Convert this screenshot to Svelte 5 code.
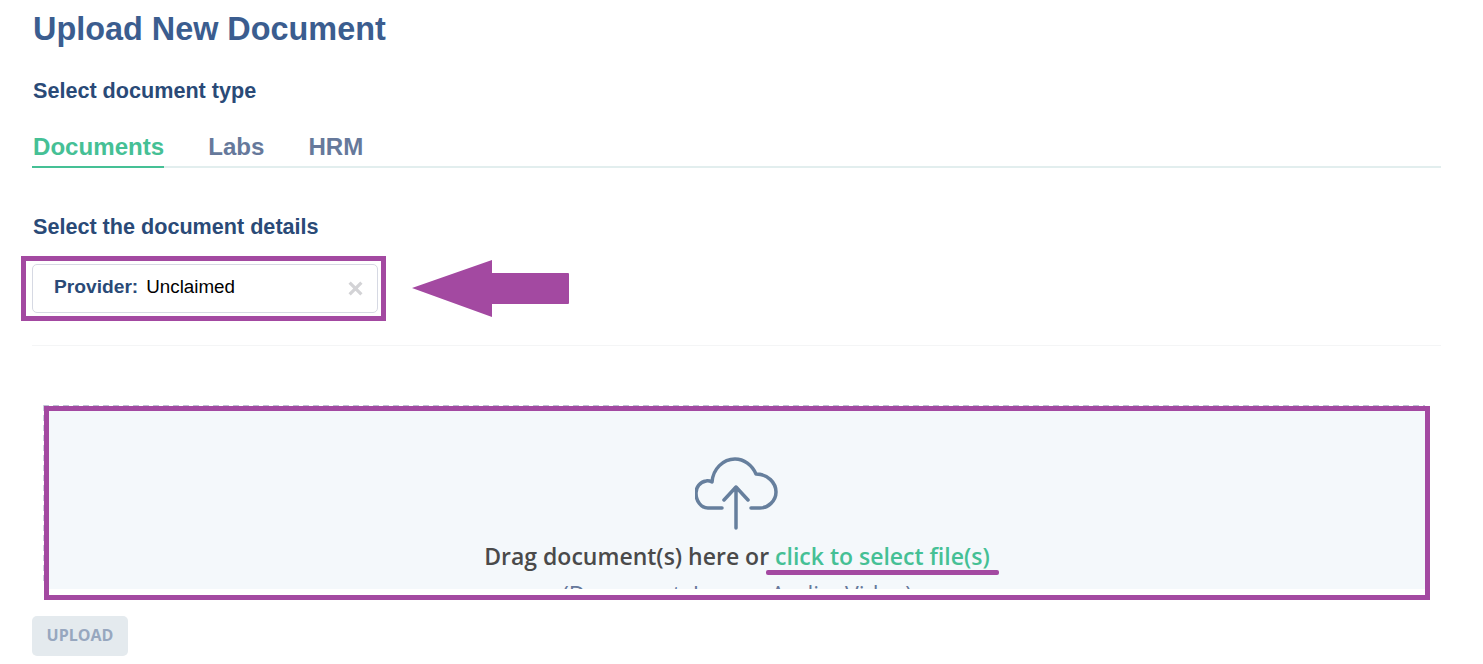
<script lang="ts">
  const tabs = ["Documents", "Labs", "HRM"];
  let active = $state("Documents");
</script>

<main class="page">
  <h1>Upload New Document</h1>

  <h2 class="type-title">Select document type</h2>
  <div class="tabs">
    {#each tabs as tab}
      <button class="tab" class:active={active === tab} onclick={() => (active = tab)}>{tab}</button>
    {/each}
  </div>

  <h2 class="details-title">Select the document details</h2>
  <div class="filter-row">
    <div class="select-wrap">
      <div class="select">
        <span class="select-label">Provider:</span>
        <span class="select-value">Unclaimed</span>
        <svg class="clear" viewBox="0 0 14 14" width="15" height="15" aria-hidden="true">
          <path d="M1.5 1.5l11 11M12.5 1.5l-11 11" />
        </svg>
      </div>
    </div>
    <svg class="arrow" viewBox="0 0 158 58" width="158" height="58" aria-hidden="true">
      <path d="M0 28L80 0V13H156Q157 13 157 14V43Q157 44 156 44H80V57Z" />
    </svg>
  </div>
  <hr />

  <div class="drop-frame">
    <div class="dropzone">
      <svg class="cloud" viewBox="1 0 84 74" width="84" height="74" aria-hidden="true">
        <path d="M28 51H14C7 51 2 44 2 36C2 30 6 25 12 24C14 23.500 16 24 18 25C19 12 29 2 41 2C50 2 58 8 62 17C74 17 82 26 82 35C82 44 74 51 66 51H57" />
        <path d="M42 71V30M30 43L42 30L54 43" />
      </svg>
      <p class="drop-text">Drag document(s) here or <span class="link">click to select file(s)</span></p>
      <p class="drop-hint">(Document, Image, Audio, Video)</p>
    </div>
    <span class="underline"></span>
  </div>

  <button class="upload" disabled>UPLOAD</button>
</main>

<style>
  :global(body) {
    margin: 0;
    background: #fff;
    font-family: "Liberation Sans", Arial, sans-serif;
  }

  .page {
    box-sizing: border-box;
    height: 664px;
    padding: 11px 42px 0 32px;
    overflow: hidden;
  }

  h1 {
    margin: 0 0 0 1px;
    font-size: 32.400px;
    line-height: 37px;
    font-weight: 700;
    color: #3b5d8f;
  }

  h2 {
    margin: 0 0 0 1px;
    font-size: 21.600px;
    line-height: 25px;
    font-weight: 700;
    color: #2a4a77;
  }

  .type-title {
    margin-top: 30px;
  }

  .tabs {
    display: flex;
    gap: 44px;
    margin-top: 29px;
    border-bottom: 2px solid #e2eeee;
  }

  .tab {
    margin-bottom: -2px;
    padding: 0 0 5px;
    border: 0;
    border-bottom: 2px solid #e2eeee;
    background: none;
    font: 700 24.100px/29px "Liberation Sans", Arial, sans-serif;
    color: #66799b;
  }

  .tab.active {
    padding-left: 1px;
    color: #45c095;
    border-bottom-color: #45c095;
  }

  .details-title {
    margin-top: 46px;
  }

  .filter-row {
    display: flex;
    align-items: center;
    margin-top: 17px;
  }

  .select-wrap {
    box-sizing: border-box;
    width: 365px;
    height: 65px;
    margin-left: -11px;
    padding: 3px 3px 3px 6px;
    border: 5px solid #a349a1;
  }

  .select {
    display: flex;
    align-items: center;
    box-sizing: border-box;
    height: 49px;
    padding: 0 14px 3px 21px;
    border: 1px solid #d6d9e3;
    border-radius: 5px;
  }

  .select-label {
    font-size: 19.200px;
    font-weight: 700;
    color: #2a4a77;
  }

  .select-value {
    flex: 1;
    margin-left: 8px;
    font-size: 18.800px;
    color: #000;
  }

  .clear {
    margin-top: 2px;
    fill: none;
    stroke: #d3d3d6;
    stroke-width: 3;
  }

  .arrow {
    margin-left: 26px;
    fill: #a349a1;
  }

  hr {
    height: 1px;
    margin: 24px 0 0;
    border: 0;
    background: #f4f5f6;
  }

  .drop-frame {
    position: relative;
    box-sizing: border-box;
    width: 1386px;
    height: 194px;
    margin: 60px 0 0 12px;
    padding-bottom: 6px;
    border: 5px solid #a349a1;
  }

  /* the dropzone's own dashed border, peeking out behind the annotation frame */
  .drop-frame::before {
    content: "";
    position: absolute;
    top: -6px;
    left: -6px;
    width: 1382px;
    height: 1px;
    background: repeating-linear-gradient(90deg, #bcc1d2 0 6px, transparent 6px 10px);
  }

  .drop-frame::after {
    content: "";
    position: absolute;
    top: -6px;
    left: -6px;
    width: 1px;
    height: 177px;
    background: repeating-linear-gradient(180deg, #ccd1dd 0 6px, transparent 6px 10px);
  }

  .dropzone {
    display: flex;
    flex-direction: column;
    align-items: center;
    height: 100%;
    overflow: hidden;
    background: #f4f8fb;
  }

  .cloud {
    flex-shrink: 0;
    margin-top: 46px;
    fill: none;
    stroke: #667f9d;
    stroke-width: 3.500;
    stroke-linecap: round;
    stroke-linejoin: round;
  }

  .drop-text {
    flex-shrink: 0;
    margin: 10px 0 0;
    font: 600 23px/30px "Open Sans", sans-serif;
    color: #4a4a4a;
  }

  .link {
    color: #45c095;
  }

  .drop-hint {
    flex-shrink: 0;
    margin: 8px 0 0;
    font: 400 23px/30px "Open Sans", sans-serif;
    color: #66799b;
  }

  .underline {
    position: absolute;
    left: 717px;
    top: 159px;
    width: 233px;
    height: 5px;
    border-radius: 2px;
    background: #a349a1;
  }

  .upload {
    display: block;
    width: 96px;
    height: 40px;
    margin-top: 16px;
    padding: 0 0 2px;
    border: 0;
    border-radius: 5px;
    background: #e4eaee;
    font: 700 16px/38px "Open Sans", sans-serif;
    color: #97a7bf;
  }
</style>
